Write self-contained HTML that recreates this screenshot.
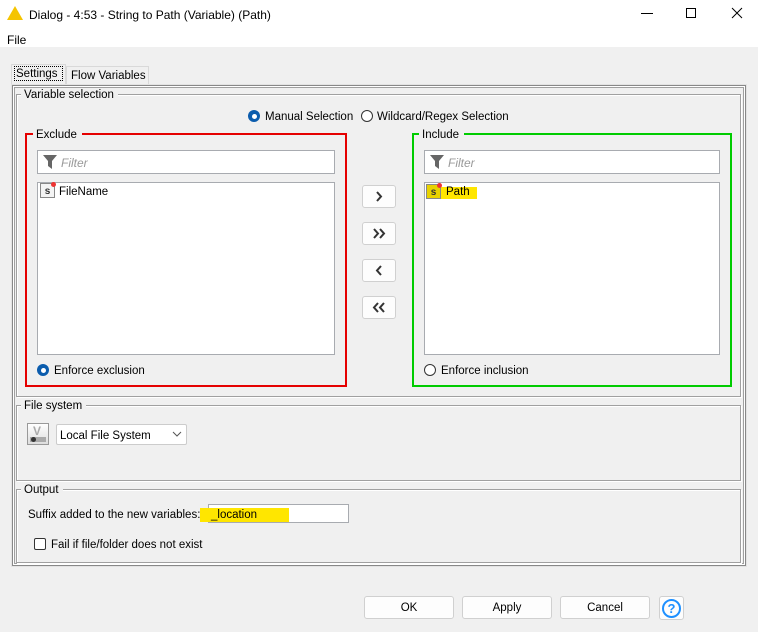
<!DOCTYPE html>
<html><head><meta charset="utf-8"><style>
*{box-sizing:border-box;margin:0;padding:0}
body{width:758px;height:632px;background:#f0f0f0;font-family:"Liberation Sans",sans-serif;font-size:11.5px;color:#000;position:relative;overflow:hidden}
.a{position:absolute}
.t{position:absolute;white-space:nowrap;line-height:14px;margin-top:1px}
.grp{position:absolute;border:1px solid #a0a0a0;box-shadow:inset 1px 1px 0 #fff,1px 1px 0 #fff}
.lg{position:absolute;background:#f0f0f0;padding:0 4px 0 3px;line-height:13px;top:-7px;left:4px}
.inp{position:absolute;background:#fff;border:1px solid #a8abb0}
.btn{position:absolute;background:#fdfdfd;border:1px solid #d0d0d0;border-radius:3px;text-align:center}
.rad{position:absolute;width:12px;height:12px;border-radius:50%;border:1px solid #333;background:#fff}
.rad.on{border:none;background:#0b5cad}
.rad.on:after{content:"";position:absolute;left:3.5px;top:3.5px;width:5px;height:5px;border-radius:50%;background:#fff}
.sic{position:absolute;width:15px;height:15px;border:1px solid #888;background:#f4f4f4;font:bold 10px "Liberation Sans",sans-serif;text-align:center;line-height:15px;color:#333}
.sic:after{content:"";position:absolute;right:-2px;top:-2px;width:5px;height:5px;border-radius:50%;background:#e33}
</style></head><body>
<div class="a" style="left:0;top:0;width:758px;height:47px;background:#fff"></div>
<svg class="a" style="left:6px;top:5px" width="18" height="16"><path d="M9 1 L17 15 L1 15 Z" fill="#f5c400"/></svg>
<div class="t" style="left:29px;top:7px;font-size:12px">Dialog - 4:53 - String to Path (Variable) (Path)</div>
<div class="a" style="left:641px;top:13px;width:12px;height:1px;background:#000"></div>
<div class="a" style="left:686px;top:8px;width:10px;height:10px;border:1px solid #000"></div>
<svg class="a" style="left:731px;top:7px" width="12" height="12"><path d="M1 1L11 11M11 1L1 11" stroke="#000" stroke-width="1"/></svg>
<div class="t" style="left:7px;top:32px;font-size:12px">File</div>

<div class="a" style="left:66px;top:66px;width:83px;height:19px;border:1px solid #d9d9d9;border-bottom:none;background:#f0f0f0"></div>
<div class="t" style="left:71px;top:68px">Flow Variables</div>
<div class="a" style="left:11px;top:64px;width:55px;height:21px;border:1px solid #d9d9d9;border-bottom:none;background:#f0f0f0"></div>
<div class="a" style="left:14px;top:66px;width:49px;height:15px;border:1px dotted #000"></div>
<div class="t" style="left:16px;top:66px">Settings</div>

<div class="a" style="left:12px;top:85px;width:734px;height:481px;border:1px solid #888;box-shadow:inset 0 0 0 1px #fff, 0 0 0 1px #e3e3e3"></div>
<div class="a" style="left:14px;top:87px;width:730px;height:477px;border:1px solid #a0a0a0"></div>

<div class="grp" style="left:16px;top:94px;width:725px;height:303px"><div class="lg" style="margin-top:1px">Variable selection</div></div>
<div class="rad on" style="left:248px;top:110px"></div>
<div class="t" style="left:265px;top:109px">Manual Selection</div>
<div class="rad" style="left:361px;top:110px"></div>
<div class="t" style="left:377px;top:109px">Wildcard/Regex Selection</div>

<div class="a" style="left:25px;top:133px;width:322px;height:254px;border:2px solid #e50000"></div>
<div class="t" style="left:33px;top:127px;background:#f0f0f0;padding:0 5px 0 3px">Exclude</div>
<div class="inp" style="left:37px;top:150px;width:298px;height:24px"></div>
<svg class="a" style="left:42px;top:154px" width="16" height="16"><path d="M1 1H15L10 7V15L6 12V7Z" fill="#666"/></svg>
<div class="t" style="left:61px;top:155px;color:#999;font-style:italic;font-size:12px">Filter</div>
<div class="inp" style="left:37px;top:182px;width:298px;height:173px"></div>
<div class="sic" style="left:40px;top:183px">s</div>
<div class="t" style="left:59px;top:184px">FileName</div>
<div class="rad on" style="left:37px;top:364px"></div>
<div class="t" style="left:54px;top:363px">Enforce exclusion</div>

<div class="btn" style="left:362px;top:185px;width:34px;height:23px"></div>
<div class="btn" style="left:362px;top:222px;width:34px;height:23px"></div>
<div class="btn" style="left:362px;top:259px;width:34px;height:23px"></div>
<div class="btn" style="left:362px;top:296px;width:34px;height:23px"></div>
<svg class="a" style="left:362px;top:185px" width="34" height="140" fill="none" stroke="#333" stroke-width="2">
<path d="M15 7L19 11.5L15 16"/>
<path d="M12 44L16 48.5L12 53M18 44L22 48.5L18 53"/>
<path d="M19 81L15 85.5L19 90"/>
<path d="M16 118L12 122.5L16 127M22 118L18 122.5L22 127"/>
</svg>

<div class="a" style="left:412px;top:133px;width:320px;height:254px;border:2px solid #00cc00"></div>
<div class="t" style="left:419px;top:127px;background:#f0f0f0;padding:0 5px 0 3px">Include</div>
<div class="inp" style="left:424px;top:150px;width:296px;height:24px"></div>
<svg class="a" style="left:429px;top:154px" width="16" height="16"><path d="M1 1H15L10 7V15L6 12V7Z" fill="#666"/></svg>
<div class="t" style="left:448px;top:155px;color:#999;font-style:italic;font-size:12px">Filter</div>
<div class="inp" style="left:424px;top:182px;width:296px;height:173px"></div>
<div class="a" style="left:427px;top:187px;width:50px;height:12px;background:#ffe600"></div>
<div class="sic" style="left:426px;top:184px;background:#e8d200">s</div>
<div class="t" style="left:446px;top:184px">Path</div>
<div class="rad" style="left:424px;top:364px"></div>
<div class="t" style="left:441px;top:363px">Enforce inclusion</div>

<div class="grp" style="left:16px;top:405px;width:725px;height:76px"><div class="lg" style="margin-top:1px">File system</div></div>
<div class="a" style="left:27px;top:423px;width:22px;height:22px;border:1px solid #999;background:linear-gradient(#fff,#ddd)"></div>
<div class="t" style="left:33px;top:423px;font-weight:bold;color:#aaa;font-size:12px">V</div>
<div class="a" style="left:30px;top:437px;width:16px;height:5px;background:#aaa"></div>
<div class="a" style="left:31px;top:437px;width:5px;height:5px;border-radius:50%;background:#333"></div>
<div class="a" style="left:56px;top:424px;width:131px;height:21px;background:#fff;border:1px solid #ccc;border-radius:2px"></div>
<div class="t" style="left:60px;top:428px">Local File System</div>
<svg class="a" style="left:172px;top:431px" width="10" height="6"><path d="M1 1L5 5L9 1" fill="none" stroke="#555"/></svg>

<div class="grp" style="left:16px;top:489px;width:725px;height:74px"><div class="lg" style="margin-top:1px">Output</div></div>
<div class="t" style="left:28px;top:507px">Suffix added to the new variables:</div>
<div class="inp" style="left:208px;top:504px;width:141px;height:19px"></div>
<div class="a" style="left:200px;top:508px;width:89px;height:14px;background:#ffe600"></div>
<div class="t" style="left:211px;top:507px">_location</div>
<div class="a" style="left:34px;top:538px;width:12px;height:12px;border:1px solid #333;border-radius:2px;background:#fff"></div>
<div class="t" style="left:51px;top:537px">Fail if file/folder does not exist</div>

<div class="btn" style="left:364px;top:596px;width:90px;height:23px;line-height:22px">OK</div>
<div class="btn" style="left:462px;top:596px;width:90px;height:23px;line-height:22px">Apply</div>
<div class="btn" style="left:560px;top:596px;width:90px;height:23px;line-height:22px">Cancel</div>
<div class="btn" style="left:659px;top:596px;width:25px;height:24px"></div>
<div class="a" style="left:662px;top:599px;width:19px;height:19px;border:2px solid #1e90ff;border-radius:50%;color:#1e90ff;font-weight:bold;font-size:13px;text-align:center;line-height:15px">?</div>
</body></html>
